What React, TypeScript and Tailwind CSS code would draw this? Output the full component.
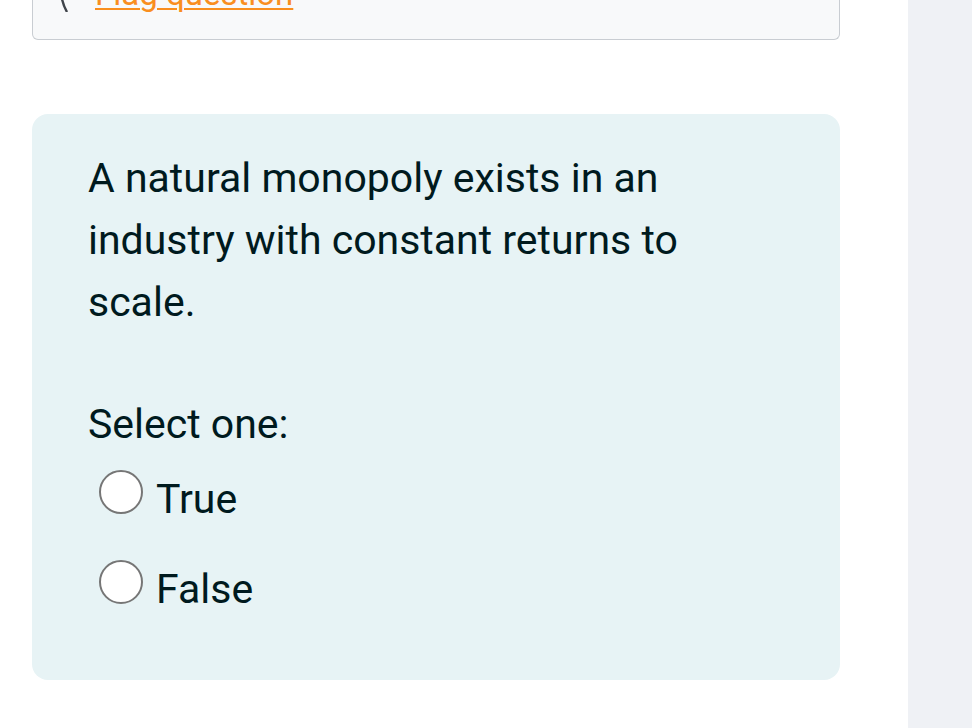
export default function App() {
  const options = ['True', 'False'];

  return (
    <div className="flex min-h-[728px] bg-white font-['Roboto',sans-serif]">
      <main className="w-[908px] pl-8 pr-[68px]">
        {/* info box, scrolled off the top */}
        <div className="flex h-10 items-start overflow-hidden rounded-b-md border-[1.5px] border-t-0 border-[#c9cdd2] bg-[#f8f9fa]">
          <svg className="ml-[26px] h-3 w-3 shrink-0" viewBox="0 0 12 12">
            <path d="M3 -1 Q4.5 6 8 12" fill="none" stroke="#3f444a" strokeWidth="2.4" />
          </svg>
          <a className="-mt-[23px] ml-[24px] text-[33px] leading-none text-[#f98e1f] underline decoration-[2px] underline-offset-[3px]">
            Flag question
          </a>
        </div>

        {/* question */}
        <div className="mt-[74px] rounded-2xl bg-[#e7f3f5] pb-[60px] pl-14 pr-10 pt-[33px] text-[41px] leading-[62px] text-[#001a1e]">
          <p className="max-w-[620px]">
            A natural monopoly exists in an industry with constant returns to scale.
          </p>
          <p className="mt-[60px]">Select one:</p>
          <div className="mt-[13px] flex flex-col gap-[28px]">
            {options.map((o) => (
              <label key={o} className="flex items-start">
                <span className="ml-[11px] mt-[2px] h-11 w-11 shrink-0 rounded-full border-[2.5px] border-[#767676] bg-white" />
                <span className="ml-[13px]">{o}</span>
              </label>
            ))}
          </div>
        </div>
      </main>
      <aside className="flex-1 bg-[#eff1f5]" />
    </div>
  );
}
